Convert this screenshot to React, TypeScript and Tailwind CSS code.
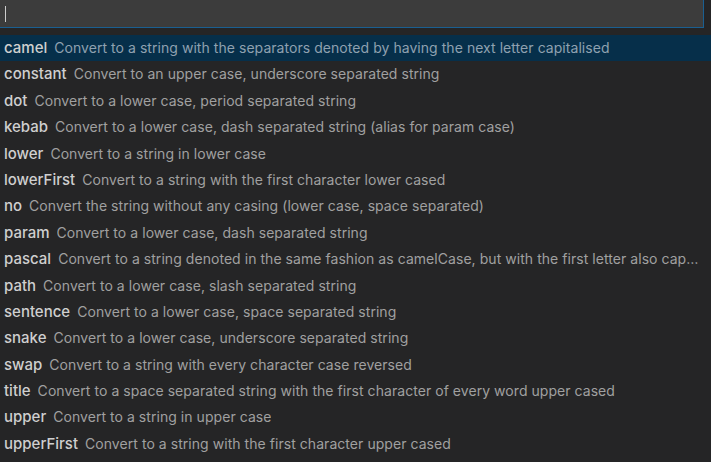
import React from "react";

const items: [string, string][] = [
  ["camel", "Convert to a string with the separators denoted by having the next letter capitalised"],
  ["constant", "Convert to an upper case, underscore separated string"],
  ["dot", "Convert to a lower case, period separated string"],
  ["kebab", "Convert to a lower case, dash separated string (alias for param case)"],
  ["lower", "Convert to a string in lower case"],
  ["lowerFirst", "Convert to a string with the first character lower cased"],
  ["no", "Convert the string without any casing (lower case, space separated)"],
  ["param", "Convert to a lower case, dash separated string"],
  ["pascal", "Convert to a string denoted in the same fashion as camelCase, but with the first letter also capitalised"],
  ["path", "Convert to a lower case, slash separated string"],
  ["sentence", "Convert to a lower case, space separated string"],
  ["snake", "Convert to a lower case, underscore separated string"],
  ["swap", "Convert to a string with every character case reversed"],
  ["title", "Convert to a space separated string with the first character of every word upper cased"],
  ["upper", "Convert to a string in upper case"],
  ["upperFirst", "Convert to a string with the first character upper cased"],
];

export default function App() {
  return (
    <div className="h-[462px] w-[711px] overflow-hidden bg-[#252526] font-['Inter','Noto_Sans',sans-serif]">
      {/* quick pick input */}
      <div className="pr-[7px]">
        <div className="flex h-[28px] items-center border-r border-b border-[#1a5f91] bg-[#3c3c3c] pl-[5px]">
          <span className="h-[16px] w-px bg-[#cccccc]" />
        </div>
      </div>

      <ul className="mt-[7px]">
        {items.map(([label, desc], i) => (
          <li
            key={label}
            className={
              i === 0
                ? "flex h-[26.4px] items-baseline overflow-hidden whitespace-nowrap bg-[#062f4a] pl-[4px] pr-[10px] leading-[26.4px]"
                : "flex h-[26.4px] items-baseline overflow-hidden whitespace-nowrap pl-[4px] pr-[10px] leading-[26.4px]"
            }
          >
            <span className="shrink-0 text-[15px] font-medium text-[#cfcfcf]">{label}</span>
            <span
              className={
                i === 0
                  ? "ml-[7px] truncate text-[14px] tracking-[0.05px] text-[#8fa1b0]"
                  : "ml-[7px] truncate text-[14px] tracking-[0.05px] text-[#a0a0a0]"
              }
            >
              {desc}
            </span>
          </li>
        ))}
      </ul>
    </div>
  );
}
